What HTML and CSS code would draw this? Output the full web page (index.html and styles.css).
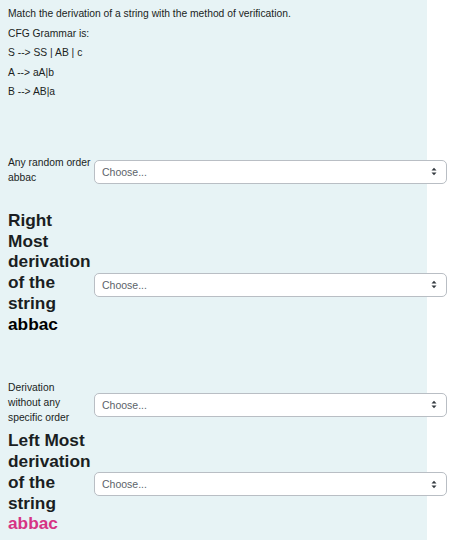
FILE: index.html
```html
<!DOCTYPE html>
<html lang="en">
<head>
<meta charset="utf-8">
<title>Match question</title>
<link rel="stylesheet" href="styles.css">
</head>
<body>
<div class="panel">
  <div class="intro">
    <p>Match the derivation of a string with the method of verification.</p>
    <p>CFG Grammar is:</p>
    <p>S --&gt; SS | AB | c</p>
    <p>A --&gt; aA|b</p>
    <p>B --&gt; AB|a</p>
  </div>

  <div class="row row-1">
    <div class="label">Any random order abbac</div>
    <div class="select"><span class="placeholder">Choose...</span><svg class="arrows" width="6" height="9" viewBox="0 0 6 9"><path d="M0.5 3.6 L3 0.8 L5.5 3.6 Z M0.5 5.4 L3 8.2 L5.5 5.4 Z" fill="#343a40"/></svg></div>
  </div>

  <div class="row row-2">
    <div class="label heading heading-pad">Right Most derivation of the string <span class="dark">abbac</span></div>
    <div class="select"><span class="placeholder">Choose...</span><svg class="arrows" width="6" height="9" viewBox="0 0 6 9"><path d="M0.5 3.6 L3 0.8 L5.5 3.6 Z M0.5 5.4 L3 8.2 L5.5 5.4 Z" fill="#343a40"/></svg></div>
  </div>

  <div class="row row-3">
    <div class="label">Derivation<br>without any specific order</div>
    <div class="select"><span class="placeholder">Choose...</span><svg class="arrows" width="6" height="9" viewBox="0 0 6 9"><path d="M0.5 3.6 L3 0.8 L5.5 3.6 Z M0.5 5.4 L3 8.2 L5.5 5.4 Z" fill="#343a40"/></svg></div>
  </div>

  <div class="row row-4">
    <div class="label heading">Left Most derivation of the string <span class="pink">abbac</span></div>
    <div class="select"><span class="placeholder">Choose...</span><svg class="arrows" width="6" height="9" viewBox="0 0 6 9"><path d="M0.5 3.6 L3 0.8 L5.5 3.6 Z M0.5 5.4 L3 8.2 L5.5 5.4 Z" fill="#343a40"/></svg></div>
  </div>
</div>
</body>
</html>
```

FILE: styles.css
```css
html, body {
  margin: 0;
  padding: 0;
  background: #ffffff;
}

body {
  font-family: "Liberation Sans", Arial, sans-serif;
  color: #1a1e22;
  width: 474px;
  height: 544px;
  overflow: hidden;
}

.panel {
  width: 427px;
  height: 540px;
  background: #e7f3f5;
  box-sizing: border-box;
  padding: 6px 0 0 8px;
}

.intro p {
  margin: 0 0 4.6px 0;
  font-size: 10.3px;
  line-height: 15px;
}

.row {
  display: flex;
  align-items: center;
  width: 439px;
}

.label {
  width: 84px;
  flex: 0 0 84px;
  font-size: 10.3px;
  line-height: 15px;
  margin-right: 2px;
}

.heading {
  font-size: 17.28px;
  line-height: 1.2;
  font-weight: 700;
}

.heading-pad {
  padding-bottom: 21px;
}

.dark {
  color: #000000;
}

.pink {
  color: #d63384;
}

.row-1 { margin-top: 55.6px; }
.row-2 { margin-top: 25px; }
.row-3 { margin-top: 25px; }
.row-4 { margin-top: 5px; }

.select {
  flex: 1 1 auto;
  box-sizing: border-box;
  height: 24px;
  margin-top: 4px;
  background: #ffffff;
  border: 1px solid #b9bec4;
  border-radius: 5px;
  display: flex;
  align-items: center;
  justify-content: space-between;
  padding: 0 9px 0 7px;
}

.placeholder {
  font-size: 10.5px;
  color: #5c636a;
}

.arrows {
  display: block;
}
```
